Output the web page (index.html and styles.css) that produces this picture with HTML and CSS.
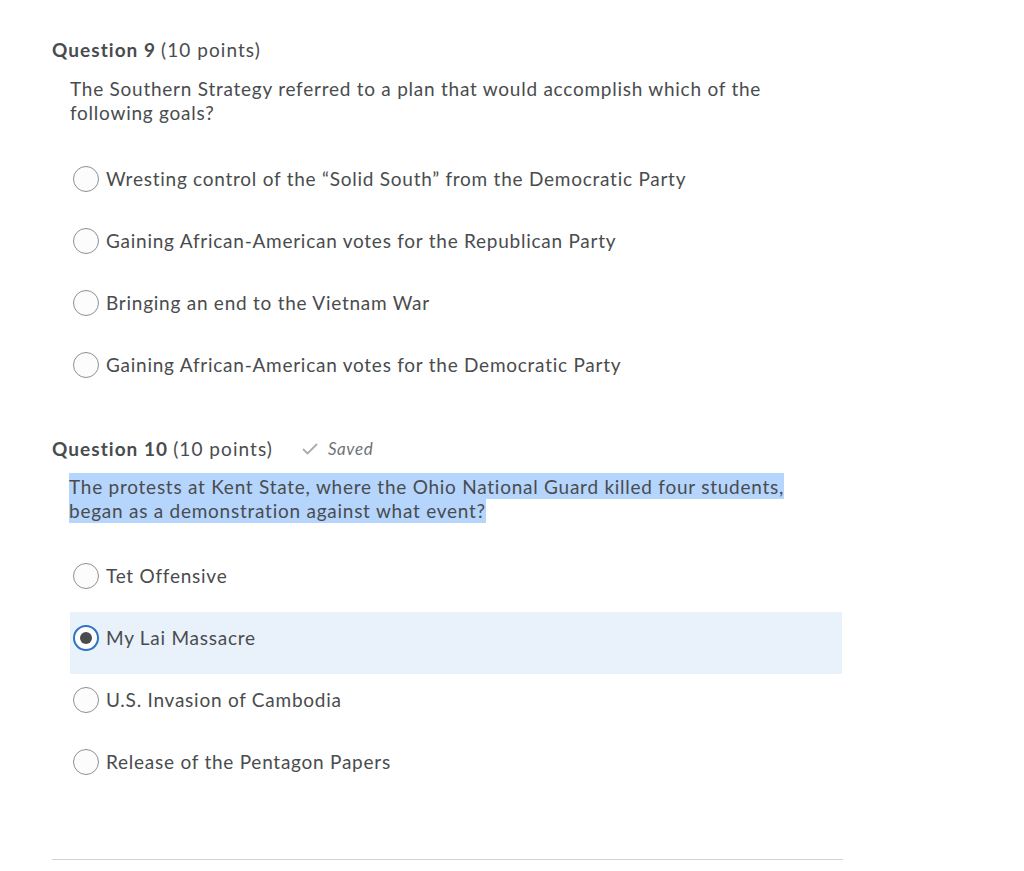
FILE: index.html
```html
<!DOCTYPE html>
<html>
<head>
<meta charset="utf-8">
<link rel="stylesheet" href="styles.css">
</head>
<body>
<div class="page">
  <section class="question q9">
    <h2 class="q-head"><strong>Question 9</strong> (10 points)</h2>
    <p class="q-text">The Southern Strategy referred to a plan that would accomplish which of the following goals?</p>
    <ul class="options">
      <li class="option"><span class="radio"></span><span class="label">Wresting control of the “Solid South” from the Democratic Party</span></li>
      <li class="option"><span class="radio"></span><span class="label">Gaining African-American votes for the Republican Party</span></li>
      <li class="option"><span class="radio"></span><span class="label">Bringing an end to the Vietnam War</span></li>
      <li class="option"><span class="radio"></span><span class="label">Gaining African-American votes for the Democratic Party</span></li>
    </ul>
  </section>
  <section class="question q10">
    <h2 class="q-head"><strong>Question 10</strong> (10 points)
      <span class="saved"><svg class="check" width="16" height="12" viewBox="0 0 16 12"><path d="M1.5 6.5 L5.5 10.5 L14.5 1.5" fill="none" stroke="#a9adb1" stroke-width="1.8" stroke-linecap="round" stroke-linejoin="round"/></svg><em>Saved</em></span>
    </h2>
    <p class="q-text"><span class="sel">The protests at Kent State, where the Ohio National Guard killed four students, began as a demonstration against what event?</span></p>
    <ul class="options">
      <li class="option"><span class="radio"></span><span class="label">Tet Offensive</span></li>
      <li class="option selected"><span class="radio checked"></span><span class="label">My Lai Massacre</span></li>
      <li class="option"><span class="radio"></span><span class="label">U.S. Invasion of Cambodia</span></li>
      <li class="option"><span class="radio"></span><span class="label">Release of the Pentagon Papers</span></li>
    </ul>
  </section>
  <hr class="divider">
</div>
</body>
</html>
```

FILE: styles.css
```css
html, body {
  margin: 0;
  padding: 0;
  background: #ffffff;
}
body {
  font-family: Lato, "Open Sans", sans-serif;
  color: #494c4e;
  font-size: 19px;
  line-height: 24px;
  letter-spacing: 0.75px;
}
.page {
  width: 791px;
  margin-left: 52px;
  padding-top: 38px;
}
.q-head {
  margin: 0;
  font-size: 19px;
  font-weight: 400;
  line-height: 24px;
  letter-spacing: 1.05px;
  display: flex;
  align-items: center;
}
.q-head strong {
  font-weight: 700;
  margin-right: 5px;
}
.saved {
  display: inline-flex;
  align-items: center;
  margin-left: 29px;
  color: #6e7377;
  font-size: 17px;
  letter-spacing: 0.6px;
}
.saved em {
  font-style: italic;
}
.check {
  margin-right: 10px;
}
.q-text {
  margin: 15px 0 0 18px;
  width: 740px;
}
.sel {
  background: #b5d5fd;
  padding: 2px 0 1px;
  box-decoration-break: clone;
  -webkit-box-decoration-break: clone;
}
.q10 .q-text {
  margin-left: 17px;
  margin-top: 14px;
  width: 745px;
}
.options {
  list-style: none;
  margin: 28px 0 0 18px;
  padding: 0;
  width: 772px;
}
.option {
  display: flex;
  align-items: center;
  height: 24px;
  padding: 14px 0 24px 3px;
}
.option.selected {
  background: #e9f1fb;
}
.radio {
  box-sizing: border-box;
  width: 26px;
  height: 26px;
  border: 1px solid #8d9094;
  border-radius: 50%;
  background: #fcfcfd;
  flex: none;
  margin-right: 7px;
  display: flex;
  align-items: center;
  justify-content: center;
}
.radio.checked {
  border: 2px solid #2f73c4;
  background: #ffffff;
}
.radio.checked::after {
  content: "";
  width: 12px;
  height: 12px;
  border-radius: 50%;
  background: #494c4e;
}
.q10 {
  margin-top: 36px;
}
.q10 .options {
  margin-top: 27px;
}
.divider {
  margin: 61px 0 0 0;
  border: 0;
  border-top: 1px solid #cfd2d8;
  height: 0;
}
```
